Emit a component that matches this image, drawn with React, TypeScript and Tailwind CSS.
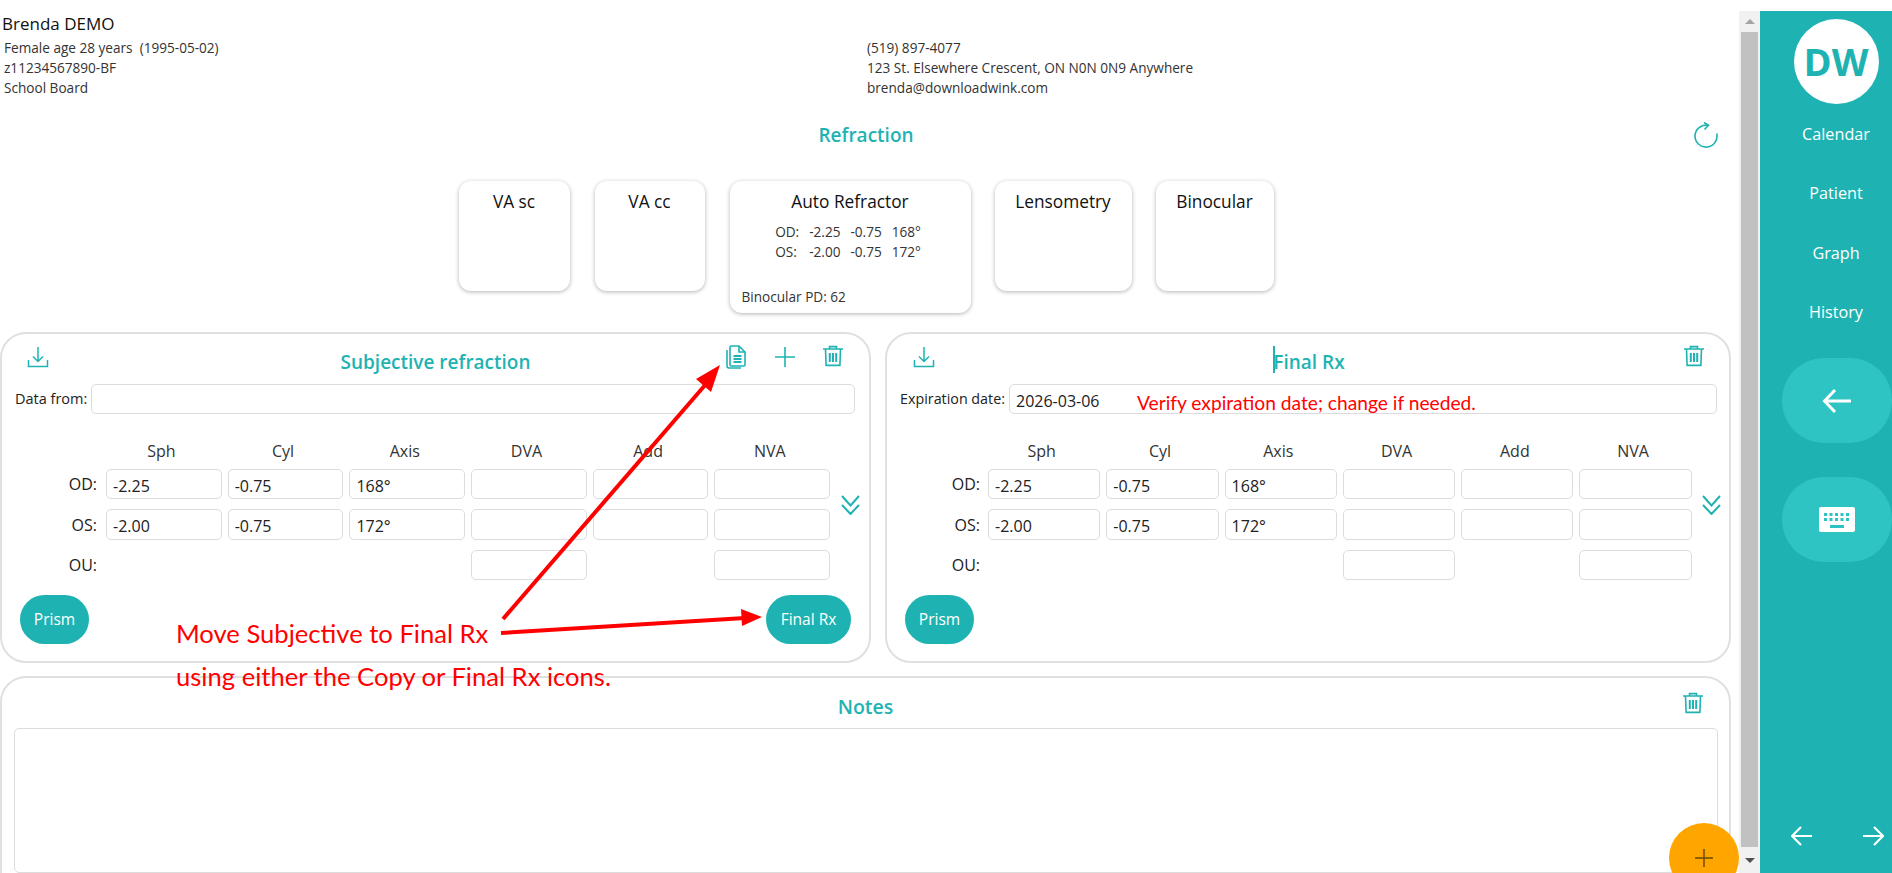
const teal = "text-[#1eb3b2]";

function TrashIcon() {
  return (
    <svg width="22" height="22" viewBox="0 0 22 22" fill="none" stroke="#1eb3b2" strokeWidth="1.6">
      <path d="M1 4h20M7.5 4V1.6h7V4M3.5 4l.6 16.4h13.8l.6-16.4" />
      <path d="M7.8 8v9M11 8v9M14.2 8v9" strokeWidth="2" />
    </svg>
  );
}

function DownloadIcon() {
  return (
    <svg width="22" height="22" viewBox="0 0 22 22" fill="none" stroke="#1eb3b2" strokeWidth="1.5">
      <path d="M11 1v14M6 10.5l5 5 5-5" />
      <path d="M1.5 14v6.5h19V14" />
    </svg>
  );
}

function CopyIcon() {
  return (
    <svg width="20" height="24" viewBox="0 0 20 24" fill="none" stroke="#1eb3b2" strokeWidth="1.6">
      <path d="M5 1h8l6 6v13a1 1 0 0 1-1 1H5a1 1 0 0 1-1-1V2a1 1 0 0 1 1-1z" />
      <path d="M13 1v6h6" />
      <path d="M1 5v16a2 2 0 0 0 2 2h12" />
      <path d="M7.5 11h8M7.5 14h8M7.5 17h8" strokeWidth="1.8" />
    </svg>
  );
}

function PlusIcon({ color = "#1eb3b2", size = 20 }: { color?: string; size?: number }) {
  return (
    <svg width={size} height={size} viewBox="0 0 20 20" fill="none" stroke={color} strokeWidth="1.6">
      <path d="M10 0v20M0 10h20" />
    </svg>
  );
}

function ChevronsIcon() {
  return (
    <svg width="19" height="20" viewBox="0 0 19 20" fill="none" stroke="#1eb3b2" strokeWidth="2">
      <path d="M1 1l8.5 9.5L18 1M1 10l8.5 9L18 10" />
    </svg>
  );
}

function Field({ value = "", className = "" }: { value?: string; className?: string }) {
  return (
    <input
      readOnly
      value={value}
      className={`w-full min-w-0 h-[30px] border border-[#dcdcdc] rounded-[5px] pl-[6px] pr-[6px] pt-[3px] text-[16px] text-[#212121] bg-white outline-none ${className}`}
    />
  );
}

const heads = ["Sph", "Cyl", "Axis", "DVA", "Add", "NVA"];

function RxGrid({ cols, labelPad }: { cols: string; labelPad: string }) {
  return (
    <div className={`grid ${cols} gap-x-[6px] gap-y-[10px] mt-[24px] items-center`}>
      <div />
      {heads.map((h) => (
        <div key={h} className="h-[26px] -mb-[5px] pr-[5px] text-center text-[16px] leading-[26px] text-[#333333]">
          {h}
        </div>
      ))}
      <div />

      <div className={`text-right text-[16px] text-[#212121] ${labelPad}`}>OD:</div>
      <Field value="-2.25" />
      <Field value="-0.75" />
      <Field value="168°" />
      <Field />
      <Field />
      <Field />
      <div className="row-span-2 flex justify-center">
        <ChevronsIcon />
      </div>

      <div className={`text-right text-[16px] text-[#212121] ${labelPad}`}>OS:</div>
      <Field value="-2.00" className="h-[31px]" />
      <Field value="-0.75" className="h-[31px]" />
      <Field value="172°" className="h-[31px]" />
      <Field className="h-[31px]" />
      <Field className="h-[31px]" />
      <Field className="h-[31px]" />

      <div className={`text-right text-[16px] text-[#212121] ${labelPad}`}>OU:</div>
      <div />
      <div />
      <div />
      <Field />
      <div />
      <Field />
      <div />
    </div>
  );
}

function PillButton({ children, className = "" }: { children: string; className?: string }) {
  return (
    <button className={`h-[49px] rounded-[25px] bg-[#1eb3b2] text-white text-[15.5px] ${className}`}>
      {children}
    </button>
  );
}

function SmallCard({ title, className = "", children }: { title: string; className?: string; children?: React.ReactNode }) {
  return (
    <div className={`relative h-[110px] rounded-[12px] bg-white shadow-[0_1px_4px_rgba(0,0,0,0.3)] ${className}`}>
      <div className="pt-[9px] text-center text-[17.3px] leading-[24px] font-medium text-[#111111]">{title}</div>
      {children}
    </div>
  );
}

export default function App() {
  return (
    <div
      className="relative flex h-[873px] w-[1892px] overflow-hidden bg-white"
      style={{ fontFamily: '"Open Sans", sans-serif' }}
    >
      {/* main scrolling column */}
      <div className="w-[1739px] h-[873px] overflow-hidden shrink-0">
        <div className="w-[1732px]">
          <div className="pt-[12px] pl-[2px] text-[17px] leading-[24px] text-[#111111]">Brenda DEMO</div>
          <div className="grid grid-cols-[863px_1fr] pl-[4px] mt-[2px] text-[13.6px] leading-[20px] text-[#333333]">
            <div>
              <div>Female age 28 years&nbsp; (1995-05-02)</div>
              <div>z11234567890-BF</div>
              <div>School Board</div>
            </div>
            <div>
              <div>(519) 897-4077</div>
              <div>123 St. Elsewhere Crescent, ON N0N 0N9 Anywhere</div>
              <div>brenda@downloadwink.com</div>
            </div>
          </div>

          <div className="grid grid-cols-[1fr_auto_1fr] items-center h-[40px] mt-[17px]">
            <div />
            <div className={`text-[19px] font-semibold ${teal}`}>Refraction</div>
            <div className="flex justify-end pr-[14px] -mt-[1px]">
              <svg width="24" height="26" viewBox="0 0 24 26" fill="none" stroke="#1eb3b2" strokeWidth="1.6">
                <path d="M22.700 11.500A11 11 0 1 1 13.500 3.200" />
                <path d="M10 0.500L14.500 3.200L10.500 7.500" />
              </svg>
            </div>
          </div>

          <div className="flex justify-center items-start h-[132px] mt-[26px]">
            <SmallCard title="VA sc" className="w-[111px]" />
            <SmallCard title="VA cc" className="w-[110px] ml-[25px]" />
            <SmallCard title="Auto Refractor" className="w-[241px] h-[132px] ml-[25px]">
              <div className="mt-[8px] flex justify-center pr-[4px] text-[13.6px] leading-[20px] text-[#333333]">
                <div className="grid grid-cols-[auto_auto_auto_auto] gap-x-[10px]">
                  <span>OD:</span><span>-2.25</span><span>-0.75</span><span>168°</span>
                  <span>OS:</span><span>-2.00</span><span>-0.75</span><span>172°</span>
                </div>
              </div>
              <div className="absolute left-[12px] bottom-[6px] text-[13.6px] leading-[20px] text-[#333333]">Binocular PD: 62</div>
            </SmallCard>
            <SmallCard title="Lensometry" className="w-[137px] ml-[24px]" />
            <SmallCard title="Binocular" className="w-[118px] ml-[24px]" />
          </div>

          <div className="grid grid-cols-[871px_846px] gap-x-[14px] mt-[19px]">
            {/* subjective */}
            <div className="h-[331px] border-2 border-[#e0e0e0] rounded-[26px] bg-white">
              <div className="grid grid-cols-[1fr_auto_1fr] h-[50px] pl-[25px] pr-[25px]">
                <div className="pt-[12px]"><DownloadIcon /></div>
                <div className={`pt-[15px] text-[19px] leading-[26px] font-semibold ${teal}`}>Subjective refraction</div>
                <div className="flex justify-end items-start pt-[11px]">
                  <CopyIcon />
                  <div className="pt-[2px] ml-[29px]"><PlusIcon /></div>
                  <div className="ml-[27px]"><TrashIcon /></div>
                </div>
              </div>
              <div className="flex items-center pl-[13px] pr-[14px] gap-x-[5px]">
                <span className="w-[71px] shrink-0 text-[14.5px] text-[#212121] whitespace-nowrap">Data from:</span>
                <Field />
              </div>
              <RxGrid cols="grid-cols-[98px_repeat(6,115.7px)_28px]" labelPad="pr-[3px]" />
              <div className="flex justify-between mt-[15px] pl-[18px] pr-[18px]">
                <PillButton className="w-[69px]">Prism</PillButton>
                <PillButton className="w-[85px]">Final Rx</PillButton>
              </div>
            </div>

            {/* final rx */}
            <div className="h-[331px] border-2 border-[#e0e0e0] rounded-[26px] bg-white">
              <div className="grid grid-cols-[1fr_auto_1fr] h-[50px] pl-[26px] pr-[24px]">
                <div className="pt-[12px]"><DownloadIcon /></div>
                <div className={`relative pt-[15px] text-[19px] leading-[26px] font-semibold ${teal}`}>
                  <span className="absolute left-0 top-[12px] h-[27px] w-[2px] bg-[#1eb3b2]" />
                  Final Rx
                </div>
                <div className="flex justify-end items-start pt-[11px]">
                  <TrashIcon />
                </div>
              </div>
              <div className="flex items-center pl-[13px] pr-[12px] gap-x-[5px]">
                <span className="w-[104px] shrink-0 text-[14.3px] text-[#212121] whitespace-nowrap">Expiration date:</span>
                <Field value="2026-03-06" />
              </div>
              <RxGrid cols="grid-cols-[95px_repeat(6,112.3px)_28px]" labelPad="pr-[2px]" />
              <div className="flex mt-[15px] pl-[18px]">
                <PillButton className="w-[69px]">Prism</PillButton>
              </div>
            </div>
          </div>

          {/* notes */}
          <div className="mt-[13px] w-[1731px] h-[230px] border-2 border-[#e0e0e0] rounded-[26px] bg-white">
            <div className="grid grid-cols-[1fr_auto_1fr] h-[50px]">
              <div />
              <div className={`pt-[16px] text-[19.5px] leading-[26px] font-semibold ${teal}`}>Notes</div>
              <div className="flex justify-end pt-[14px] pr-[25px]"><TrashIcon /></div>
            </div>
            <div className="ml-[12px] mr-[11px] h-[145px] border border-[#dcdcdc] rounded-[5px]" />
          </div>
        </div>
      </div>

      {/* scrollbar */}
      <div className="w-[21px] mt-[11px] h-[862px] shrink-0 bg-[#f1f1f1] flex flex-col items-center">
        <div className="h-[21px] w-full flex items-center justify-center">
          <div className="w-0 h-0 border-x-[5px] border-x-transparent border-b-[5px] border-b-[#a3a3a3]" />
        </div>
        <div className="w-[17px] h-[815px] bg-[#c1c1c1]" />
        <div className="flex-1 w-full flex items-center justify-center">
          <div className="w-0 h-0 border-x-[5px] border-x-transparent border-t-[5px] border-t-[#505050]" />
        </div>
      </div>

      {/* sidebar */}
      <div className="w-[132px] mt-[11px] h-[862px] shrink-0 bg-[#1eb3b2] flex flex-col items-center text-white">
        <div className="mt-[8px] ml-[20px] w-[85px] h-[85px] rounded-full bg-white flex items-center justify-center text-[38px] font-bold text-[#1eb3b2]">
          DW
        </div>
        <nav className="ml-[20px] mt-[18px] flex flex-col items-center text-[16.2px]">
          <a className="h-[24px] leading-[24px]">Calendar</a>
          <a className="h-[24px] leading-[24px] mt-[35px]">Patient</a>
          <a className="h-[24px] leading-[24px] mt-[36px]">Graph</a>
          <a className="h-[24px] leading-[24px] mt-[35px]">History</a>
        </nav>
        <button className="mt-[34px] ml-[22px] w-[110px] h-[85px] rounded-[42px] bg-[#2ec4c3] flex items-center justify-center">
          <svg width="30" height="26" viewBox="0 0 30 26" fill="none" stroke="white" strokeWidth="3">
            <path d="M29 13H3M13 2L2.500 13 13 24" />
          </svg>
        </button>
        <button className="mt-[34px] ml-[22px] w-[110px] h-[85px] rounded-[42px] bg-[#2ec4c3] flex items-center justify-center">
          <svg width="36" height="25" viewBox="0 0 36 25">
            <rect width="36" height="25" rx="2" fill="white" />
            <g fill="#2ec4c3">
              <path d="M5 6h3v3H5zM10.500 6h3v3h-3zM16 6h3v3h-3zM21.500 6h3v3h-3zM27 6h3v3h-3z" />
              <path d="M5 11h3v3H5zM10.500 11h3v3h-3zM16 11h3v3h-3zM21.500 11h3v3h-3zM27 11h3v3h-3z" />
              <path d="M11 18h14v3H11z" />
            </g>
          </svg>
        </button>
        <div className="mt-auto mb-[27px] w-full flex justify-between pl-[31px] pr-[8px]">
          <svg width="21" height="20" viewBox="0 0 21 20" fill="none" stroke="white" strokeWidth="2.2">
            <path d="M21 10H2M10 1l-9 9 9 9" />
          </svg>
          <svg width="21" height="20" viewBox="0 0 21 20" fill="none" stroke="white" strokeWidth="2.2">
            <path d="M0 10h19M11 1l9 9-9 9" />
          </svg>
        </div>
      </div>

      {/* floating add */}
      <button className="absolute left-[1669px] top-[823px] w-[70px] h-[70px] rounded-full bg-[#ffa500] flex items-center justify-center">
        <PlusIcon color="#6b4a00" size={18} />
      </button>

      {/* red annotations drawn on top of the screenshot */}
      <svg className="absolute inset-0 pointer-events-none" width="1892" height="873" viewBox="0 0 1892 873" fill="none">
        <path d="M503 619L706 384" stroke="#ff0000" strokeWidth="4" />
        <path d="M720 365L696 379L711 392Z" fill="#ff0000" />
        <path d="M501 633L745 618" stroke="#ff0000" strokeWidth="4" />
        <path d="M762 617L741 609L742 626Z" fill="#ff0000" />
      </svg>
      <div className="absolute left-[176px] top-[618px] text-[25.6px] leading-[30px] text-[#ff0000] pointer-events-none" style={{ fontFamily: "Lato, sans-serif" }}>
        Move Subjective to Final Rx
      </div>
      <div className="absolute left-[176px] top-[661px] text-[25.6px] leading-[30px] text-[#ff0000] pointer-events-none" style={{ fontFamily: "Lato, sans-serif" }}>
        using either the Copy or Final Rx icons.
      </div>
      <div className="absolute left-[1137px] top-[391px] text-[19.2px] leading-[24px] text-[#ff0000] pointer-events-none" style={{ fontFamily: "Lato, sans-serif" }}>
        Verify expiration date; change if needed.
      </div>
    </div>
  );
}
